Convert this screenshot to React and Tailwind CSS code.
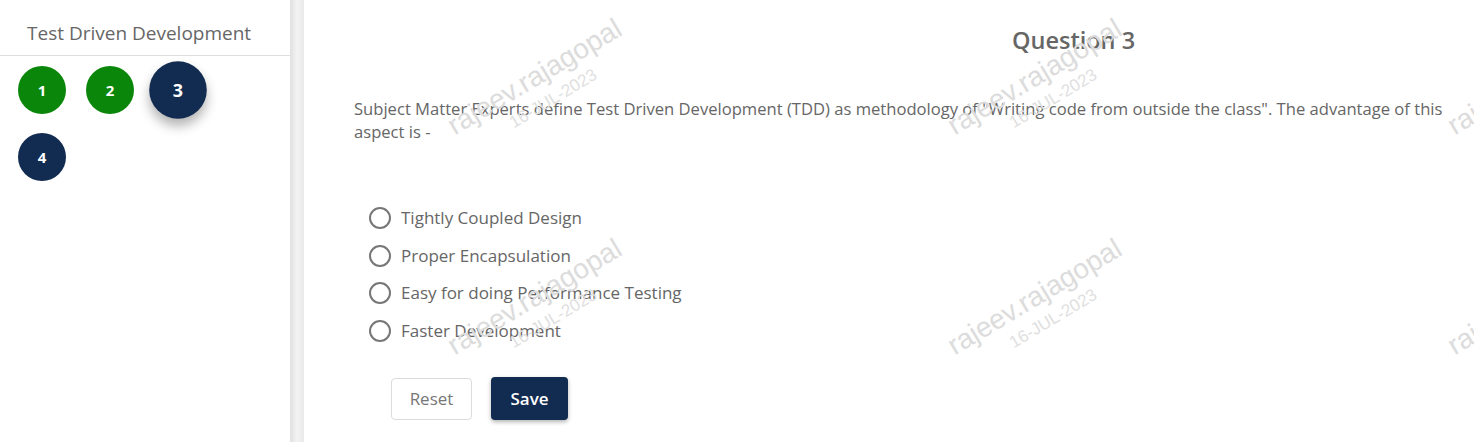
import React from "react";

const options = [
  "Tightly Coupled Design",
  "Proper Encapsulation",
  "Easy for doing Performance Testing",
  "Faster Development",
];

const marks = [
  { x: 448, y: 20 },
  { x: 948, y: 20 },
  { x: 1448, y: 20 },
  { x: 448, y: 240 },
  { x: 948, y: 240 },
  { x: 1448, y: 240 },
];

function Watermark({ x, y }) {
  return (
    <div
      className="pointer-events-none absolute h-[120px] w-[200px]"
      style={{ left: x, top: y }}
    >
      <div className="absolute left-[-12px] top-[43px] origin-center -rotate-[31deg] whitespace-nowrap text-[28px] leading-none text-[#dcdcdc] [font-family:'Liberation_Sans',Arial,sans-serif]">
        rajeev.rajagopal
      </div>
      <div className="absolute left-[56px] top-[70px] origin-center -rotate-[31deg] whitespace-nowrap text-[17px] leading-none text-[#e0e0e0] [font-family:'Liberation_Sans',Arial,sans-serif]">
        16-JUL-2023
      </div>
    </div>
  );
}

function Circle({ n, color, active }) {
  return (
    <div
      className={`flex h-[48px] w-[48px] items-center justify-center rounded-full text-[15px] font-bold text-white ${color} ${
        active ? "scale-[1.2] shadow-[0_6px_10px_rgba(0,0,0,0.3)]" : ""
      }`}
    >
      {n}
    </div>
  );
}

export default function App() {
  return (
    <div className="relative flex h-[442px] w-[1474px] overflow-hidden bg-white [font-family:'Open_Sans',sans-serif]">
      <div className="w-[290px] shrink-0">
        <div className="h-[56px] border-b border-[#dedede] pl-[27px] pt-[20px] text-[19px] leading-[26px] text-[#666]">
          Test Driven Development
        </div>
        <div className="flex w-[210px] flex-wrap gap-x-[20px] gap-y-[19px] pl-[18px] pt-[10px]">
          <Circle n="1" color="bg-[#0a870a]" />
          <Circle n="2" color="bg-[#0a870a]" />
          <Circle n="3" color="bg-[#122b50]" active />
          <Circle n="4" color="bg-[#122b50]" />
        </div>
      </div>
      <div className="w-[14px] shrink-0 bg-gradient-to-r from-[#e0e0e0] via-[#f3f3f3] to-[#e9e9e9]" />
      <div className="flex-1 pl-[50px]">
        <div className="pl-[658px] pt-[24px] text-[23.5px] font-semibold leading-[32px] text-[#666]">
          Question 3
        </div>
        <p className="mt-[41px] w-[1112px] text-[16.6px] leading-[23px] text-[#666]">
          Subject Matter Experts define Test Driven Development (TDD) as methodology of "Writing code from outside the class". The advantage of this aspect is -
        </p>
        <div className="mt-[56px] flex flex-col pl-[15px]">
          {options.map((o) => (
            <label key={o} className="flex h-[37.7px] items-center gap-[10px] text-[17px] text-[#666]">
              <span className="h-[22px] w-[22px] rounded-full border-2 border-[#777]" />
              {o}
            </label>
          ))}
        </div>
        <div className="mt-[28px] flex gap-[19px] pl-[37px]">
          <button className="h-[42px] w-[81px] rounded-[4px] border border-[#dcdcdc] bg-white text-[17px] text-[#777]">
            Reset
          </button>
          <button className="mt-[-1px] h-[43px] w-[77px] rounded-[4px] bg-[#122b50] text-[17px] font-semibold text-white shadow-[0_2px_4px_rgba(0,0,0,0.3)]">
            Save
          </button>
        </div>
      </div>
      {marks.map((m, i) => (
        <Watermark key={i} x={m.x} y={m.y} />
      ))}
    </div>
  );
}
